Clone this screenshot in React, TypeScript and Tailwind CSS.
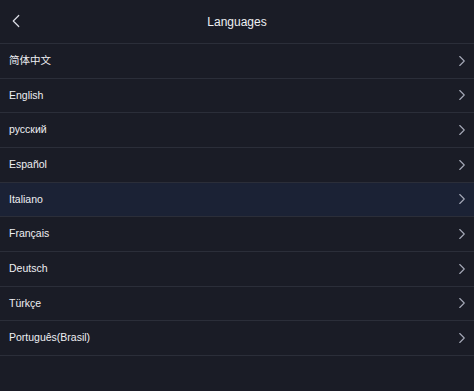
import { ChevronLeft, ChevronRight } from "lucide-react";

const languages = [
  "简体中文",
  "English",
  "русский",
  "Español",
  "Italiano",
  "Français",
  "Deutsch",
  "Türkçe",
  "Português(Brasil)",
];

const current = "Italiano";

export default function App() {
  return (
    <div
      className="min-h-[391px] w-full bg-[#1a1c26] text-[#eeeff3]"
      style={{ fontFamily: '"Liberation Sans", Arial, "Noto Sans CJK SC", sans-serif' }}
    >
      <header className="relative flex h-[44px] items-center justify-center border-b border-[#2b2e39]">
        <button className="absolute left-[5px] top-[10px] text-[#dcdee6]">
          <ChevronLeft className="h-[22px] w-[22px]" strokeWidth={1.3} />
        </button>
        <h1 className="pt-[1px] text-[12px]">Languages</h1>
      </header>
      <ul>
        {languages.map((lang) => (
          <li
            key={lang}
            className={`flex h-[34.67px] items-center justify-between border-b border-[#2b2e39] pl-[9px] pr-[3px] ${
              lang === current ? "bg-[#1b2235]" : ""
            }`}
          >
            <span className="text-[10.5px]">{lang}</span>
            <ChevronRight className="h-[18px] w-[18px] text-[#a4a8b6]" strokeWidth={1.5} />
          </li>
        ))}
      </ul>
    </div>
  );
}
